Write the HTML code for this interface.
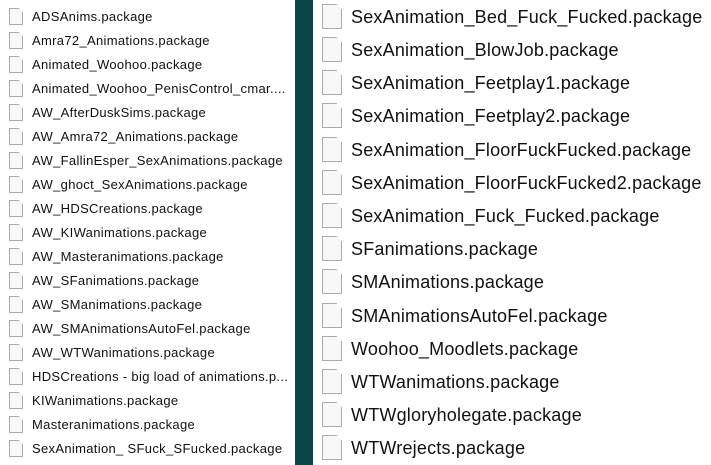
<!DOCTYPE html>
<html><head><style>
body{margin:0;width:711px;height:465px;background:#fff;position:relative;overflow:hidden;font-family:"Liberation Sans",sans-serif;color:#111}
.div{position:absolute;left:295px;top:0;width:18px;height:465px;background:#0b4545}
.r{position:absolute;white-space:nowrap}
.l{left:9px;font-size:13px;letter-spacing:0.32px;height:24px;line-height:24px}
.l i{display:inline-block;width:12px;height:15px;border:1px solid #aaa;background:#f8f8f8;vertical-align:-4px;margin-right:9px;clip-path:polygon(0 0,70% 0,100% 25%,100% 100%,0 100%)}
.g{left:322px;font-size:18px;letter-spacing:0.2px;height:33px;line-height:33px}
.g i{display:inline-block;width:18px;height:23px;border:1px solid #aaa;background:#f8f8f8;vertical-align:-6px;margin-right:9px;clip-path:polygon(0 0,72% 0,100% 22%,100% 100%,0 100%)}
</style></head><body>
<div class="div"></div>
<div class="r l" style="top:5px"><i></i>ADSAnims.package</div>
<div class="r l" style="top:29px"><i></i>Amra72_Animations.package</div>
<div class="r l" style="top:53px"><i></i>Animated_Woohoo.package</div>
<div class="r l" style="top:77px"><i></i>Animated_Woohoo_PenisControl_cmar....</div>
<div class="r l" style="top:101px"><i></i>AW_AfterDuskSims.package</div>
<div class="r l" style="top:125px"><i></i>AW_Amra72_Animations.package</div>
<div class="r l" style="top:149px"><i></i>AW_FallinEsper_SexAnimations.package</div>
<div class="r l" style="top:173px"><i></i>AW_ghoct_SexAnimations.package</div>
<div class="r l" style="top:197px"><i></i>AW_HDSCreations.package</div>
<div class="r l" style="top:221px"><i></i>AW_KIWanimations.package</div>
<div class="r l" style="top:245px"><i></i>AW_Masteranimations.package</div>
<div class="r l" style="top:269px"><i></i>AW_SFanimations.package</div>
<div class="r l" style="top:293px"><i></i>AW_SManimations.package</div>
<div class="r l" style="top:317px"><i></i>AW_SMAnimationsAutoFel.package</div>
<div class="r l" style="top:341px"><i></i>AW_WTWanimations.package</div>
<div class="r l" style="top:365px"><i></i>HDSCreations - big load of animations.p...</div>
<div class="r l" style="top:389px"><i></i>KIWanimations.package</div>
<div class="r l" style="top:413px"><i></i>Masteranimations.package</div>
<div class="r l" style="top:437px"><i></i>SexAnimation_ SFuck_SFucked.package</div>

<div class="r g" style="top:1px"><i></i>SexAnimation_Bed_Fuck_Fucked.package</div>
<div class="r g" style="top:34px"><i></i>SexAnimation_BlowJob.package</div>
<div class="r g" style="top:67px"><i></i>SexAnimation_Feetplay1.package</div>
<div class="r g" style="top:100px"><i></i>SexAnimation_Feetplay2.package</div>
<div class="r g" style="top:134px"><i></i>SexAnimation_FloorFuckFucked.package</div>
<div class="r g" style="top:167px"><i></i>SexAnimation_FloorFuckFucked2.package</div>
<div class="r g" style="top:200px"><i></i>SexAnimation_Fuck_Fucked.package</div>
<div class="r g" style="top:233px"><i></i>SFanimations.package</div>
<div class="r g" style="top:266px"><i></i>SMAnimations.package</div>
<div class="r g" style="top:300px"><i></i>SMAnimationsAutoFel.package</div>
<div class="r g" style="top:333px"><i></i>Woohoo_Moodlets.package</div>
<div class="r g" style="top:366px"><i></i>WTWanimations.package</div>
<div class="r g" style="top:399px"><i></i>WTWgloryholegate.package</div>
<div class="r g" style="top:432px"><i></i>WTWrejects.package</div>
</body></html>
